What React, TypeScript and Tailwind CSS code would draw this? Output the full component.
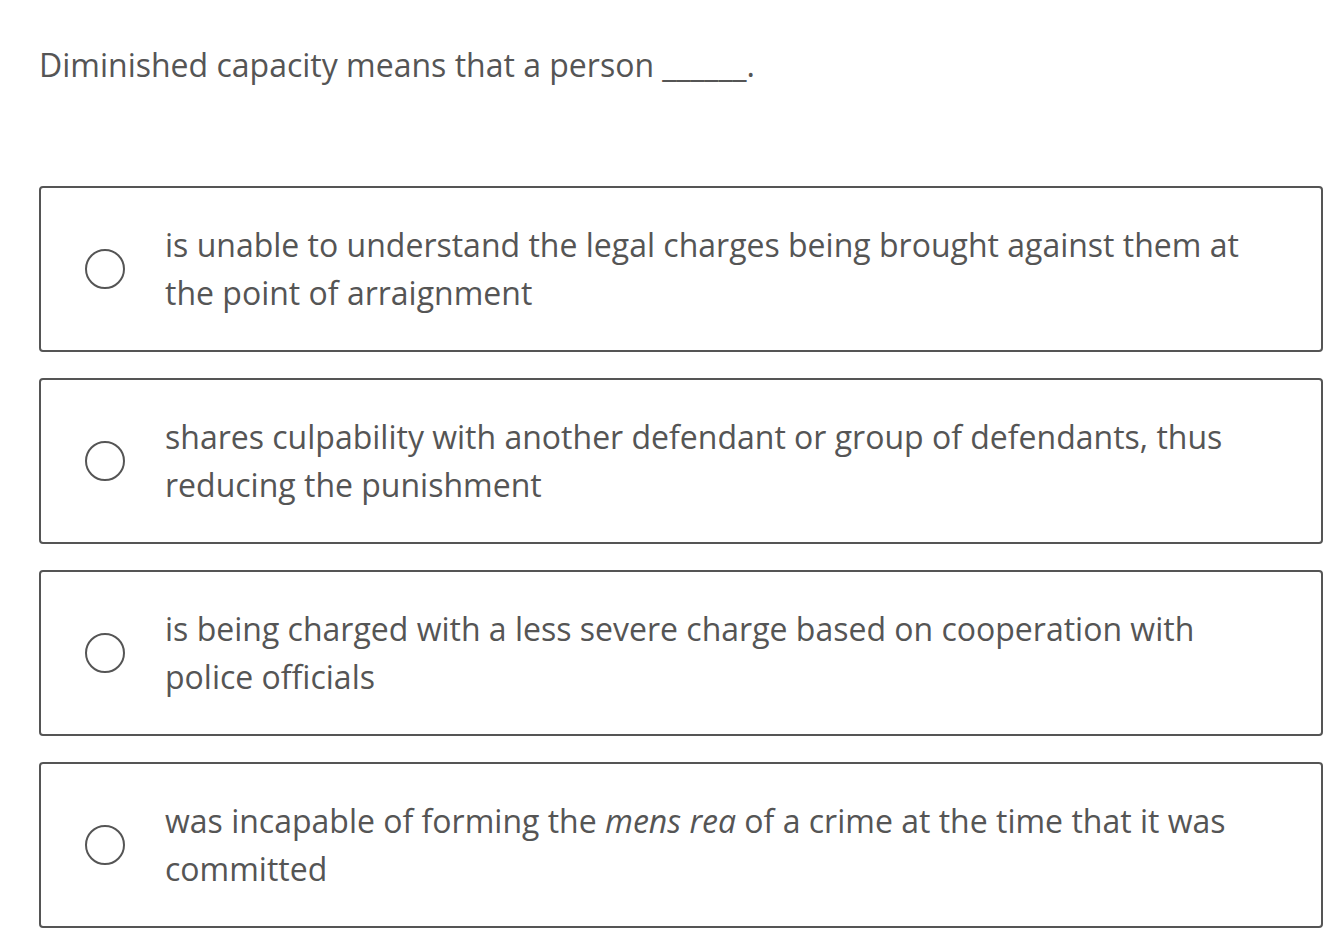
import React from "react";

const options: React.ReactNode[] = [
  <>is unable to understand the legal charges being brought against them at the point of arraignment</>,
  <>shares culpability with another defendant or group of defendants, thus reducing the punishment</>,
  <>is being charged with a less severe charge based on cooperation with police officials</>,
  <>
    was incapable of forming the <em>mens rea</em> of a crime at the time that it was committed
  </>,
];

export default function App() {
  return (
    <div
      className="w-[1342px] h-[946px] bg-white text-[#555555] overflow-hidden"
      style={{ fontFamily: '"Open Sans", sans-serif' }}
    >
      <div className="pl-[39px] pr-[19px] pt-[43px]">
        <p className="text-[32px] leading-[44px]">
          Diminished capacity means that a person ______.
        </p>
        <div className="mt-[99px] flex flex-col gap-[26px]">
          {options.map((o, i) => (
            <div
              key={i}
              className="h-[166px] border-2 border-[#555555] rounded-[4px] flex items-center"
            >
              <div className="w-[124px] shrink-0 flex justify-center pl-[4px]">
                <div className="w-[40px] h-[40px] rounded-full border-2 border-[#555555]" />
              </div>
              <div className="text-[32px] leading-[48px] pr-[50px]">{o}</div>
            </div>
          ))}
        </div>
      </div>
    </div>
  );
}
